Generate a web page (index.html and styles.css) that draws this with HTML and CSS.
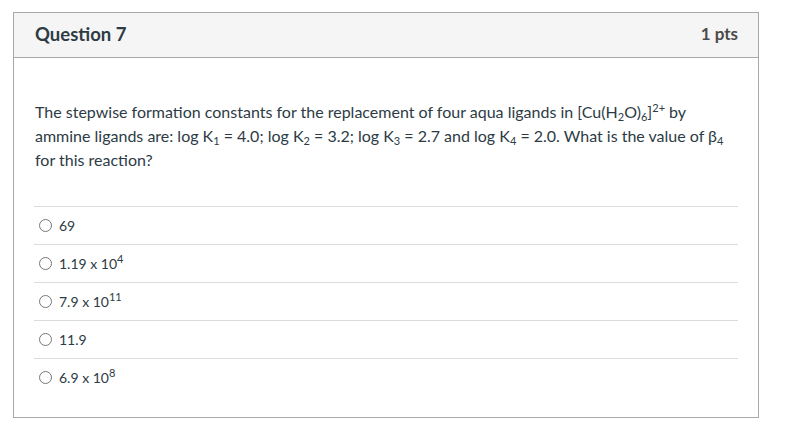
FILE: index.html
```html
<!DOCTYPE html>
<html>
<head>
<meta charset="utf-8">
<link rel="stylesheet" href="styles.css">
</head>
<body>
<div class="card">
  <div class="header">
    <span class="title">Question 7</span>
    <span class="pts">1 pts</span>
  </div>
  <div class="body">
    <p class="question">The stepwise formation constants for the replacement of four aqua ligands in [Cu(H<sub>2</sub>O)<sub>6</sub>]<sup>2+</sup> by ammine ligands are: log K<sub>1</sub> = 4.0; log K<sub>2</sub> = 3.2; log K<sub>3</sub> = 2.7 and log K<sub>4</sub> = 2.0. What is the value of β<sub>4</sub> for this reaction?</p>
    <div class="answers">
      <div class="answer"><span class="radio"></span><span>69</span></div>
      <div class="answer"><span class="radio"></span><span>1.19 x 10<sup>4</sup></span></div>
      <div class="answer"><span class="radio"></span><span>7.9 x 10<sup>11</sup></span></div>
      <div class="answer"><span class="radio"></span><span>11.9</span></div>
      <div class="answer"><span class="radio"></span><span>6.9 x 10<sup>8</sup></span></div>
    </div>
  </div>
</div>
</body>
</html>
```
FILE: styles.css
```css
html, body {
  margin: 0;
  padding: 0;
  background: #fff;
}
body {
  font-family: Lato, "Liberation Sans", sans-serif;
  color: #2d3b45;
}
.card {
  margin: 12px 0 0 13px;
  width: 744px;
  height: 404px;
  border: 1px solid #a8a8a8;
  display: flex;
  flex-direction: column;
}
.header {
  height: 41px;
  background: #f5f5f5;
  border-bottom: 1px solid #a8a8a8;
  display: flex;
  align-items: center;
  justify-content: space-between;
  padding: 0 20px 3px 21px;
}
.title {
  font-size: 18.5px;
  font-weight: 700;
  color: #2d3b45;
}
.pts {
  font-size: 17px;
  font-weight: 700;
  color: #4a4a4a;
}
.body {
  padding: 42px 20px 0 20px;
}
.question {
  margin: 0 0 0 1px;
  font-size: 16px;
  line-height: 24px;
}
sub, sup {
  font-size: 11px;
  line-height: 0;
  position: relative;
  vertical-align: baseline;
}
sub { top: 3px; }
sup { top: -6px; }
.answers {
  margin-top: 34px;
}
.answer {
  height: 37px;
  border-top: 1px solid #dcdcdc;
  display: flex;
  align-items: center;
  font-size: 14px;
  padding-left: 5px;
}
.radio {
  width: 11px;
  height: 11px;
  border: 1px solid #777;
  border-radius: 50%;
  margin-right: 7px;
  flex: none;
}
```
